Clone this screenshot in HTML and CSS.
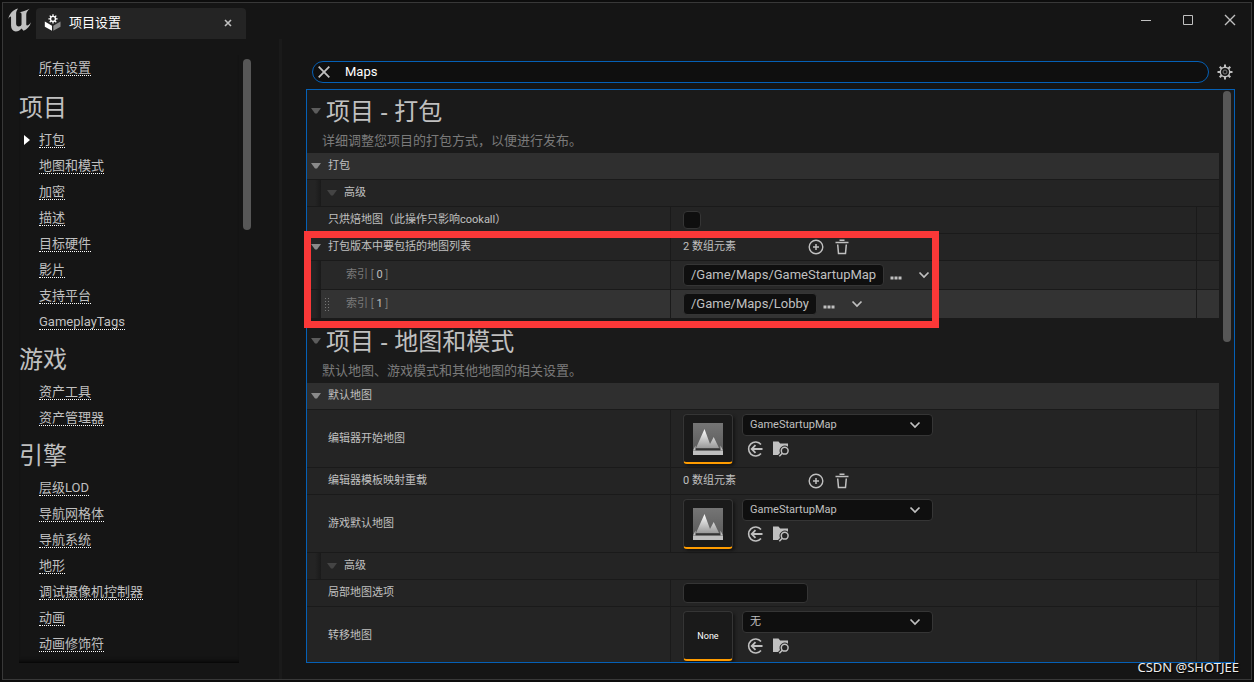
FILE: index.html
```html
<!DOCTYPE html>
<html lang="zh-CN">
<head>
    <meta charset="UTF-8">
    <meta name="viewport" content="width=device-width, initial-scale=1.0">
    <title>项目设置</title>
    <link rel="stylesheet" href="styles.css">
</head>
<body>
    <!-- Shared icons -->
    <svg class="sprite" aria-hidden="true">
        <defs>
            <linearGradient id="sky" x1="0" y1="0" x2="0" y2="1">
                <stop offset="0" stop-color="#757575"/>
                <stop offset="1" stop-color="#5c5c5c"/>
            </linearGradient>
            <linearGradient id="peak" x1="0" y1="0" x2="0" y2="1">
                <stop offset="0" stop-color="#ffffff"/>
                <stop offset="1" stop-color="#9a9a9a"/>
            </linearGradient>
        </defs>
        <symbol id="i-caret" viewBox="0 0 10 6"><path d="M0 0h10L6 5.500H4z" fill="currentColor"/></symbol>
        <symbol id="i-chevron" viewBox="0 0 12 8"><path d="M1.500 1.500L6 6l4.500-4.500" fill="none" stroke="currentColor" stroke-width="1.700"/></symbol>
        <symbol id="i-add" viewBox="0 0 16 16">
            <circle cx="8" cy="8" r="6.800" fill="none" stroke="currentColor" stroke-width="1.400"/>
            <path d="M8 5v6M5 8h6" stroke="currentColor" stroke-width="1.500"/>
        </symbol>
        <symbol id="i-trash" viewBox="0 0 16 16">
            <path d="M5.500 1.200h5M1.500 3.500h13" stroke="currentColor" stroke-width="1.500"/>
            <path d="M3.700 5.500l.8 9h7l.8-9" fill="none" stroke="currentColor" stroke-width="1.500"/>
        </symbol>
        <symbol id="i-dots" viewBox="0 0 12 4"><path d="M.5.5h3v3h-3zM4.500.5h3v3h-3zM8.500.5h3v3h-3z" fill="currentColor"/></symbol>
        <symbol id="i-use" viewBox="0 0 16 16">
            <path d="M14 3.500A7 7 0 1 0 14 12.500" fill="none" stroke="currentColor" stroke-width="1.600"/>
            <path d="M15.500 8H5M8.500 4.200L4.700 8l3.800 3.800" fill="none" stroke="currentColor" stroke-width="1.800"/>
        </symbol>
        <symbol id="i-browse" viewBox="0 0 16 16">
            <path d="M0 .5h5.500l1.700 2H15v3.200A5.300 5.300 0 0 0 7 12l-2 2H0z" fill="currentColor"/>
            <circle cx="11.700" cy="9.700" r="3.400" fill="none" stroke="currentColor" stroke-width="1.500"/>
            <path d="M9.300 12.200L6.300 15.300" stroke="currentColor" stroke-width="1.600"/>
        </symbol>
        <symbol id="i-level" viewBox="0 0 30 32">
            <path d="M0 0h30v27H0z" fill="url(#sky)"/>
            <path d="M3 25L11.500 6l5.500 15 3.700-7L26 25z" fill="url(#peak)"/>
            <path d="M2 25.500h26v2H2z" fill="#333"/>
            <path d="M0 27.500h30V32H0z" fill="#bfbfbf"/>
            <path d="M0 27.500l2.500-5v5zM30 27.500l-2.500-5v5z" fill="#bfbfbf"/>
        </symbol>
    </svg>

    <div class="window">
        <header class="titlebar">
            <svg class="logo" viewBox="23 24 68 70" aria-hidden="true">
                <path d="M24 56C27 40 37 29 53 25C49 30 47 34 47 40V69C47 75 50 78 55 78C59 78 62 75 63 72V43C63 38 61 36 57 36C65 35 76 31 87 26C80 32 77 37 77 43V72C77 77 83 77 91 66C88 79 79 87 69 91L63 84C58 89 53 93 46 93C38 92 32 86 32 76V51C32 47 28 49 24 56Z" fill="#c0c0c0"/>
            </svg>
            <div class="tab">
                <svg class="tab-icon" viewBox="130 43 51 52" aria-hidden="true">
                    <path d="M132 66l22 13v15l-22-12z" fill="#fff"/>
                    <path d="M158 79l22-13v16l-22 12z" fill="#8c8c8c"/>
                    <circle cx="157" cy="58" r="7.500" fill="none" stroke="#fff" stroke-width="4"/>
                    <path d="M157 44v6M157 66v6M143 58h6M165 58h6M147 48l4 4M163 64l4 4M147 68l4-4M163 52l4-4" stroke="#fff" stroke-width="4"/>
                </svg>
                <span>项目设置</span>
                <button class="icon-btn tab-close" aria-label="关闭标签">
                    <svg viewBox="0 0 8 8"><path d="M1 1l6 6M7 1L1 7" stroke="currentColor" stroke-width="1.600"/></svg>
                </button>
            </div>
            <div class="window-buttons">
                <button class="icon-btn" aria-label="最小化"><svg viewBox="0 0 12 12"><path d="M1 6.500h10" stroke="currentColor"/></svg></button>
                <button class="icon-btn" aria-label="最大化"><svg viewBox="0 0 12 12"><path d="M1.500 1.500h9v9h-9z" fill="none" stroke="currentColor"/></svg></button>
                <button class="icon-btn" aria-label="关闭"><svg viewBox="0 0 12 12"><path d="M1 1l10 10M11 1L1 11" stroke="currentColor" stroke-width="1.400"/></svg></button>
            </div>
        </header>

        <div class="content">
            <nav class="sidebar">
                <div class="nav-list">
                    <ul>
                        <li><a href="#all">所有设置</a></li>
                    </ul>
                    <h2>项目</h2>
                    <ul>
                        <li class="current"><a href="#packaging">打包</a></li>
                        <li><a href="#maps">地图和模式</a></li>
                        <li><a href="#crypto">加密</a></li>
                        <li><a href="#description">描述</a></li>
                        <li><a href="#hardware">目标硬件</a></li>
                        <li><a href="#movies">影片</a></li>
                        <li><a href="#platforms">支持平台</a></li>
                        <li><a href="#tags">GameplayTags</a></li>
                    </ul>
                    <h2>游戏</h2>
                    <ul>
                        <li><a href="#asset-tools">资产工具</a></li>
                        <li><a href="#asset-manager">资产管理器</a></li>
                    </ul>
                    <h2>引擎</h2>
                    <ul>
                        <li><a href="#hlod">层级LOD</a></li>
                        <li><a href="#navmesh">导航网格体</a></li>
                        <li><a href="#navsystem">导航系统</a></li>
                        <li><a href="#landscape">地形</a></li>
                        <li><a href="#debug-camera">调试摄像机控制器</a></li>
                        <li><a href="#animation">动画</a></li>
                        <li><a href="#anim-modifiers">动画修饰符</a></li>
                    </ul>
                </div>
                <div class="scrollbar"><div class="thumb thumb-nav"></div></div>
            </nav>

            <main class="main">
                <div class="toolbar">
                    <div class="search">
                        <button class="icon-btn" aria-label="清除搜索">
                            <svg viewBox="0 0 12 12"><path d="M.7.7l10.600 10.600M11.300.7L.7 11.300" stroke="currentColor" stroke-width="1.800"/></svg>
                        </button>
                        <input type="text" aria-label="搜索" value="Maps">
                    </div>
                    <button class="icon-btn settings-btn" aria-label="设置">
                        <svg viewBox="0 0 16 16">
                            <circle cx="8" cy="8" r="4.700" fill="none" stroke="currentColor" stroke-width="1.400"/>
                            <circle cx="8" cy="8" r="2" fill="none" stroke="#777"/>
                            <path d="M8 .5v3M8 12.500v3M.5 8h3M12.500 8h3M2.700 2.700l2.100 2.100M11.200 11.200l2.100 2.100M2.700 13.300l2.100-2.100M11.200 4.800l2.100-2.100" stroke="currentColor" stroke-width="2"/>
                        </svg>
                    </button>
                </div>

                <div class="panel">
                    <div class="details">
                        <section id="packaging">
                            <div class="section-head">
                                <h1><svg class="caret"><use href="#i-caret"/></svg>项目 - 打包</h1>
                                <p>详细调整您项目的打包方式，以便进行发布。</p>
                            </div>
                            <h3 class="category"><svg class="caret"><use href="#i-caret"/></svg>打包</h3>
                            <h4 class="advanced"><svg class="caret"><use href="#i-caret"/></svg>高级</h4>
                            <div class="row">
                                <label class="name" for="cookall">只烘焙地图（此操作只影响cookall）</label>
                                <div class="value"><input type="checkbox" id="cookall"></div>
                                <div class="reset"></div>
                            </div>
                            <div class="row">
                                <div class="name"><svg class="caret"><use href="#i-caret"/></svg>打包版本中要包括的地图列表</div>
                                <div class="value">
                                    <span class="count">2 数组元素</span>
                                    <button class="icon-btn" aria-label="添加元素"><svg><use href="#i-add"/></svg></button>
                                    <button class="icon-btn" aria-label="移除全部"><svg><use href="#i-trash"/></svg></button>
                                </div>
                                <div class="reset"></div>
                            </div>
                            <div class="row item">
                                <label class="name" for="map0">索引 [ <b>0</b> ]</label>
                                <div class="value">
                                    <input class="path" type="text" id="map0" value="/Game/Maps/GameStartupMap">
                                    <button class="icon-btn dots" aria-label="浏览"><svg><use href="#i-dots"/></svg></button>
                                    <button class="icon-btn chevron" aria-label="展开"><svg><use href="#i-chevron"/></svg></button>
                                </div>
                                <div class="reset"></div>
                            </div>
                            <div class="row item hovered">
                                <label class="name" for="map1"><span class="grip"></span>索引 [ <b>1</b> ]</label>
                                <div class="value">
                                    <input class="path" type="text" id="map1" value="/Game/Maps/Lobby">
                                    <button class="icon-btn dots" aria-label="浏览"><svg><use href="#i-dots"/></svg></button>
                                    <button class="icon-btn chevron" aria-label="展开"><svg><use href="#i-chevron"/></svg></button>
                                </div>
                                <div class="reset"></div>
                            </div>
                        </section>

                        <section id="maps">
                            <div class="section-head">
                                <h1><svg class="caret"><use href="#i-caret"/></svg>项目 - 地图和模式</h1>
                                <p>默认地图、游戏模式和其他地图的相关设置。</p>
                            </div>
                            <h3 class="category"><svg class="caret"><use href="#i-caret"/></svg>默认地图</h3>
                            <div class="row asset">
                                <label class="name" for="startup">编辑器开始地图</label>
                                <div class="value">
                                    <div class="preview"><svg><use href="#i-level"/></svg></div>
                                    <div class="picker">
                                        <div class="select">
                                            <select id="startup"><option>GameStartupMap</option></select>
                                            <svg><use href="#i-chevron"/></svg>
                                        </div>
                                        <div class="picker-actions">
                                            <button class="icon-btn" aria-label="使用所选资产"><svg><use href="#i-use"/></svg></button>
                                            <button class="icon-btn" aria-label="浏览资产"><svg><use href="#i-browse"/></svg></button>
                                        </div>
                                    </div>
                                </div>
                                <div class="reset"></div>
                            </div>
                            <div class="row">
                                <div class="name">编辑器模板映射重载</div>
                                <div class="value">
                                    <span class="count">0 数组元素</span>
                                    <button class="icon-btn" aria-label="添加元素"><svg><use href="#i-add"/></svg></button>
                                    <button class="icon-btn" aria-label="移除全部"><svg><use href="#i-trash"/></svg></button>
                                </div>
                                <div class="reset"></div>
                            </div>
                            <div class="row asset">
                                <label class="name" for="default-map">游戏默认地图</label>
                                <div class="value">
                                    <div class="preview"><svg><use href="#i-level"/></svg></div>
                                    <div class="picker">
                                        <div class="select">
                                            <select id="default-map"><option>GameStartupMap</option></select>
                                            <svg><use href="#i-chevron"/></svg>
                                        </div>
                                        <div class="picker-actions">
                                            <button class="icon-btn" aria-label="使用所选资产"><svg><use href="#i-use"/></svg></button>
                                            <button class="icon-btn" aria-label="浏览资产"><svg><use href="#i-browse"/></svg></button>
                                        </div>
                                    </div>
                                </div>
                                <div class="reset"></div>
                            </div>
                            <h4 class="advanced"><svg class="caret"><use href="#i-caret"/></svg>高级</h4>
                            <div class="row">
                                <label class="name" for="local-options">局部地图选项</label>
                                <div class="value"><input class="text" type="text" id="local-options"></div>
                                <div class="reset"></div>
                            </div>
                            <div class="row asset">
                                <label class="name" for="transition">转移地图</label>
                                <div class="value">
                                    <div class="preview">None</div>
                                    <div class="picker">
                                        <div class="select">
                                            <select id="transition"><option>无</option></select>
                                            <svg><use href="#i-chevron"/></svg>
                                        </div>
                                        <div class="picker-actions">
                                            <button class="icon-btn" aria-label="使用所选资产"><svg><use href="#i-use"/></svg></button>
                                            <button class="icon-btn" aria-label="浏览资产"><svg><use href="#i-browse"/></svg></button>
                                        </div>
                                    </div>
                                </div>
                                <div class="reset"></div>
                            </div>
                        </section>
                    </div>
                    <div class="scrollbar"><div class="thumb thumb-main"></div></div>
                </div>
                <div class="highlight"></div>
            </main>
        </div>
    </div>
    <div class="watermark">CSDN @SHOTJEE</div>
</body>
</html>
```

FILE: styles.css
```css
* {
    margin: 0;
    padding: 0;
    box-sizing: border-box;
}

body {
    height: 100vh;
    padding: 2px;
    overflow: hidden;
    background: #0d0d0d;
    color: #c0c0c0;
    font: 11px/16px Roboto, "Noto Sans CJK SC", sans-serif;
}

ul {
    list-style: none;
}

input,
select {
    font: inherit;
    color: inherit;
    background: #0f0f0f;
    border: 1px solid #353535;
    border-radius: 4px;
    outline: none;
}

.sprite {
    position: absolute;
    width: 0;
    height: 0;
}

.icon-btn {
    display: flex;
    flex: none;
    align-items: center;
    justify-content: center;
    width: 16px;
    height: 16px;
    border: 0;
    background: none;
    color: #c0c0c0;
}

.icon-btn svg {
    width: 100%;
    height: 100%;
}

.window {
    display: flex;
    flex-direction: column;
    height: 100%;
    border: 1px solid #383838;
    background: #151515;
}

/* Title bar */
.titlebar {
    display: flex;
    flex: none;
    height: 36px;
    padding-left: 5px;
}

.logo {
    width: 23px;
    height: 24px;
    margin: 5px 5px 0 0;
}

.tab {
    display: flex;
    align-items: center;
    gap: 8px;
    width: 210px;
    margin-top: 5px;
    padding: 0 14px 2px 8px;
    border-radius: 4px 4px 0 0;
    background: #242424;
    color: #fff;
    font-size: 13px;
}

.tab-icon {
    width: 17px;
    height: 17px;
}

.tab-close {
    width: 8px;
    height: 8px;
    margin-left: auto;
}

.window-buttons {
    display: flex;
    gap: 30px;
    margin-left: auto;
    padding: 11px 15px 0 0;
}

.window-buttons .icon-btn {
    width: 12px;
    height: 12px;
}

.content {
    display: flex;
    flex: 1;
    min-height: 0;
}

/* Sidebar */
.sidebar {
    display: flex;
    flex: none;
    width: 279px;
    padding: 16px 28px 16px 16px;
    border-right: 3px solid #1a1a1a;
}

.nav-list {
    width: 220px;
    overflow: hidden;
    border-bottom: 1px solid #080808;
    font-size: 13px;
    box-shadow: inset 0 -4px 4px -3px #080808;
}

.nav-list h2 {
    padding: 8px 0 2px;
    font-size: 24px;
    font-weight: 400;
    line-height: 34px;
}

.nav-list li {
    position: relative;
    display: flex;
    height: 26px;
    padding: 5px 0 0 20px;
}

.nav-list ul:first-child {
    margin-bottom: 2px;
}

.nav-list a {
    height: 16px;
    border-bottom: 1px dotted #fff;
    color: inherit;
    text-decoration: none;
}

.current::before {
    content: "";
    position: absolute;
    left: 5px;
    top: 8px;
    border: 5px solid transparent;
    border-left: 6px solid #fff;
    border-right: 0;
}

.scrollbar {
    flex: none;
    width: 8px;
    margin-left: 4px;
}

.thumb {
    border-radius: 4px;
    background: #575757;
}

.sidebar .scrollbar {
    padding-top: 4px;
}

.thumb-nav {
    height: 171px;
}

.thumb-main {
    height: 44%;
}

/* Search bar */
.main {
    position: relative;
    display: flex;
    flex: 1;
    flex-direction: column;
    gap: 6px;
    min-width: 0;
    padding: 22px 16px 16px 24px;
}

.toolbar {
    display: flex;
    align-items: center;
    gap: 8px;
    padding: 0 2px 0 6px;
}

.search {
    display: flex;
    flex: 1;
    align-items: center;
    height: 22px;
    padding: 0 12px 0 5px;
    border: 1px solid #0560b6;
    border-radius: 11px;
    background: #0f0f0f;
}

.search .icon-btn {
    width: 12px;
    height: 12px;
    margin-right: 15px;
}

.search input {
    flex: 1;
    height: 18px;
    padding-bottom: 2px;
    border: 0;
    background: none;
    color: #fff;
    font-size: 13px;
}

/* Details panel */
.panel {
    display: flex;
    flex: 1;
    min-height: 0;
    overflow: hidden;
    padding-right: 3px;
    border: 1px solid #0560b6;
    background: #1a1a1a;
}

.panel .scrollbar {
    padding-top: 1px;
}

.details {
    flex: 1;
    overflow: hidden;
}

.caret {
    flex: none;
    width: 10px;
    height: 6px;
    margin-right: 7px;
    color: #8a8a8a;
}

section + section {
    padding-top: 1px;
}

.section-head {
    height: 63px;
    padding: 4px;
}

.section-head h1 {
    display: flex;
    align-items: center;
    font-family: "Noto Sans", "Noto Sans CJK SC", sans-serif;
    font-size: 24px;
    font-weight: 400;
    line-height: 34px;
}

.section-head .caret {
    margin-right: 5px;
    color: #5c5c5c;
}

.section-head p {
    padding: 4px 0 0 11px;
    color: #7a7a7a;
    font-size: 13px;
    line-height: 18px;
}

.category,
.advanced {
    display: flex;
    align-items: center;
    height: 27px;
    padding: 0 4px;
    border-bottom: 1px solid #1a1a1a;
    background: #2f2f2f;
    font-size: 11px;
    font-weight: 400;
}

.advanced {
    padding-left: 20px;
    background: linear-gradient(90deg, #242424 8px, #1a1a1a 14px, #242424 14px);
}

.advanced .caret {
    color: #444;
}

.row {
    display: grid;
    grid-template-columns: 364px 1fr 22px;
    height: 27px;
    border-bottom: 1px solid #1a1a1a;
    background: #242424;
}

.name {
    display: flex;
    align-items: center;
    padding-left: 21px;
    border-right: 1px solid #1a1a1a;
}

.name .caret {
    margin-left: -17px;
}

.value {
    display: flex;
    align-items: center;
    padding-left: 12px;
    border-right: 1px solid #1a1a1a;
}

.count {
    width: 125px;
}

.count + .icon-btn {
    margin-right: 10px;
}

.item {
    height: 29px;
    background: #282828;
}

.item .name {
    position: relative;
    padding-left: 39px;
    background: linear-gradient(90deg, #242424 8px, #1a1a1a 14px, transparent 14px);
    color: #7a7a7a;
    white-space: pre;
}

.item b {
    color: #c0c0c0;
    font-weight: 400;
}

.hovered {
    background: #333;
}

.grip {
    position: absolute;
    left: 17px;
    top: 7px;
    width: 5px;
    height: 14px;
    background: radial-gradient(#777 1px, transparent 1px) 0 0 / 3px 3px;
}

input[type="checkbox"] {
    appearance: none;
    width: 18px;
    height: 18px;
}

.path {
    height: 22px;
    padding: 0 7px 2px;
    field-sizing: content;
    font-size: 13px;
}

.dots {
    width: 12px;
    height: 4px;
    margin: 6px 0 0 6px;
}

.chevron {
    width: 12px;
    height: 8px;
    margin-left: 16px;
}

.text {
    width: 125px;
    height: 20px;
}

/* Asset pickers */
.asset {
    height: 58px;
}

.preview {
    display: flex;
    align-items: center;
    justify-content: center;
    width: 50px;
    height: 50px;
    padding-top: 2px;
    border: 1px solid #353535;
    border-bottom: 2px solid #ff9c00;
    border-radius: 4px;
    background: #1a1a1a;
    box-shadow: 2px 2px 3px #151515;
    color: #fff;
    font-size: 9px;
}

.preview svg {
    width: 30px;
    height: 32px;
}

.picker {
    display: flex;
    flex-direction: column;
    gap: 5px;
    height: 50px;
    margin-left: 9px;
}

.select {
    position: relative;
    width: 191px;
}

.select select {
    display: block;
    appearance: none;
    width: 100%;
    height: 22px;
    padding: 0 24px 0 7px;
}

.select svg {
    position: absolute;
    right: 12px;
    top: 7px;
    width: 12px;
    height: 8px;
    pointer-events: none;
}

.picker-actions {
    display: flex;
    gap: 10px;
    padding-left: 5px;
}

/* Frame around the map list */
.highlight {
    position: absolute;
    left: 22px;
    top: 192px;
    width: 635px;
    height: 97px;
    border: 7px solid #fa3838;
    pointer-events: none;
}

.watermark {
    position: absolute;
    right: 15px;
    bottom: 7px;
    color: #eee;
    font: 13px/16px "Noto Sans", sans-serif;
    text-shadow: 1px 1px 1px #000;
}
```
